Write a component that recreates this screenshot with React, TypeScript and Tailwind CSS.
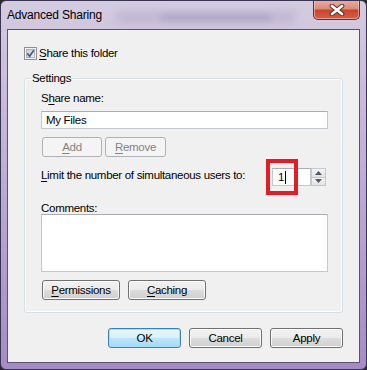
import React from "react";

type BtnProps = {
  children: React.ReactNode;
  className?: string;
  disabled?: boolean;
  primary?: boolean;
};

// Win7 style push button
function Btn({ children, className = "", disabled, primary }: BtnProps) {
  let look =
    "border-[#707070] bg-[linear-gradient(#f2f2f2_0%,#ebebeb_50%,#dddddd_50%,#cfcfcf_100%)] shadow-[inset_0_0_0_1px_#fbfbfb] text-black";
  if (disabled) look = "border-[#adb2b5] bg-[#f4f4f4] text-[#838383]";
  if (primary)
    look =
      "border-[#3c7fb1] bg-[linear-gradient(#eaf6fd_0%,#d9f0fc_50%,#bee6fd_50%,#a7d9f5_100%)] shadow-[inset_0_0_0_1px_#9fe0ff] text-black";
  return (
    <div className={`h-[20px] flex items-center justify-center rounded-[3px] border ${look} ${className}`}>
      {children}
    </div>
  );
}

function Check() {
  return (
    <svg width="13" height="13" viewBox="0 0 13 13">
      <defs>
        <linearGradient id="cb" x1="0" y1="0" x2="1" y2="1">
          <stop offset="0" stopColor="#c4cad3" />
          <stop offset="1" stopColor="#f6f6f6" />
        </linearGradient>
      </defs>
      <rect x="0.5" y="0.5" width="12" height="12" fill="#f4f4f4" stroke="#8e8f8f" />
      <rect x="2.5" y="2.5" width="8" height="8" fill="url(#cb)" stroke="#aeb3b9" />
      <path d="M3.3 6.4 L5.6 9.2 L9.8 3.2" fill="none" stroke="#4a5f97" strokeWidth="1.8" />
    </svg>
  );
}

function CloseButton() {
  return (
    <div className="-mt-[1px] mr-[6px] w-[47px] h-[20px] rounded-b-[5px] border border-t-0 border-[#6b2f2a] bg-[linear-gradient(#eab0a4_0%,#dc8a78_45%,#c8452f_55%,#d2624c_100%)] shadow-[inset_0_0_0_1px_rgba(255,220,210,0.5)] flex items-center justify-center">
      <svg width="16" height="12" viewBox="0 0 16 12">
        <path d="M3 2 L13 10 M13 2 L3 10" stroke="#5a2a24" strokeWidth="4.6" strokeLinecap="round" />
        <path d="M3 2 L13 10 M13 2 L3 10" stroke="#ffffff" strokeWidth="2.8" strokeLinecap="round" />
      </svg>
    </div>
  );
}

export default function App() {
  return (
    <div className="w-[367px] h-[370px] bg-[#2a2a2a] font-['Liberation_Sans',Arial,sans-serif] text-[11.5px] tracking-[-0.3px] leading-[15px] text-black">
      <div className="relative w-full h-full rounded-[6px] border border-[#3b3450] bg-[linear-gradient(180deg,#d4cce0_0%,#c4b5d9_35%,#a68ac8_100%)] flex flex-col overflow-hidden">
        {/* blurred glass behind title */}
        <div className="absolute left-[115px] top-[10px] w-[180px] h-[12px] rounded-full bg-[#8d7ea6]/25 blur-[4px]" />
        <div className="absolute left-[160px] top-[13px] w-[110px] h-[7px] rounded-full bg-[#6f6288]/20 blur-[3px]" />

        {/* title bar */}
        <div className="relative h-[28px] flex items-start justify-between">
          <span className="pl-[6px] pt-[7px] text-[12px] tracking-[-0.2px]">Advanced Sharing</span>
          <CloseButton />
        </div>

        {/* client area */}
        <div className="relative mx-[6px] h-[334px] border border-[#5a5468] bg-[#f0f0f0] px-[16px] flex flex-col">
          <div className="mt-[17px] h-[13px] flex items-center gap-[2px]">
            <Check />
            <span>
              <u className="underline-offset-[2px]">S</u>hare this folder
            </span>
          </div>

          {/* Settings group */}
          <div className="mt-[18px] border border-[#d5dfe5] rounded-[3px] shadow-[inset_0_0_0_1px_#fdfdfd] pl-[16px] pr-[14px] pb-[12px] flex flex-col">
            <span className="-mt-[8px] -ml-[10px] self-start px-[1px] bg-[#f0f0f0]">Settings</span>

            <span className="mt-[5px]">
              S<u className="underline-offset-[2px]">h</u>are name:
            </span>
            <div className="mt-[5px] h-[18px] bg-white border border-[#c3c8d0] border-t-[#abadb3] flex items-center pl-[4px]">
              My Files
            </div>

            <div className="mt-[8px] ml-[1px] flex gap-[3px]">
              <Btn disabled className="w-[60px]">
                <span>
                  <u className="underline-offset-[2px]">A</u>dd
                </span>
              </Btn>
              <Btn disabled className="w-[61px]">
                <span>
                  <u className="underline-offset-[2px]">R</u>emove
                </span>
              </Btn>
            </div>

            <div className="mt-[11px] h-[18px] flex items-center">
              <span className="-mt-[4px]">
                <u className="underline-offset-[2px]">L</u>imit the number of simultaneous users to:
              </span>
              <div className="relative ml-auto mr-[2px] flex">
                <div className="w-[39px] h-[18px] bg-white border border-[#c3c8d0] border-t-[#abadb3] flex items-center pl-[5px]">
                  <span>1</span>
                  <span className="ml-[1px] w-[1px] h-[13px] bg-black" />
                </div>
                <div className="w-[15px] h-[18px] flex flex-col border border-[#c3c8d0] bg-[#eeeeee]">
                  <div className="flex-1 flex items-center justify-center border-b border-[#c8c8c8] bg-[linear-gradient(#f5f5f5,#e3e3e3)]">
                    <svg width="7" height="4" viewBox="0 0 7 4">
                      <path d="M0 4 L3.5 0 L7 4 Z" fill="#4d5a6a" />
                    </svg>
                  </div>
                  <div className="flex-1 flex items-center justify-center bg-[linear-gradient(#f5f5f5,#e3e3e3)]">
                    <svg width="7" height="4" viewBox="0 0 7 4">
                      <path d="M0 0 L7 0 L3.5 4 Z" fill="#4d5a6a" />
                    </svg>
                  </div>
                </div>
                {/* red highlight */}
                <div className="absolute -left-[6px] -top-[9px] w-[32px] h-[36px] border-[4px] border-[#e11d26]" />
              </div>
            </div>

            <span className="mt-[16px] leading-[12px]">
              C<u className="underline-offset-[2px]">o</u>mments:
            </span>
            <div className="h-[58px] bg-white border border-[#c3c8d0] border-t-[#abadb3]" />

            <div className="mt-[8px] ml-[1px] flex gap-[8px]">
              <Btn className="w-[78px]">
                <span>
                  <u className="underline-offset-[2px]">P</u>ermissions
                </span>
              </Btn>
              <Btn className="w-[78px]">
                <span>
                  <u className="underline-offset-[2px]">C</u>aching
                </span>
              </Btn>
            </div>
          </div>

          {/* dialog buttons */}
          <div className="mt-[15px] flex justify-end gap-[8px]">
            <Btn primary className="w-[73px]">OK</Btn>
            <Btn className="w-[73px]">Cancel</Btn>
            <Btn className="w-[73px]">Apply</Btn>
          </div>
        </div>
      </div>
    </div>
  );
}
